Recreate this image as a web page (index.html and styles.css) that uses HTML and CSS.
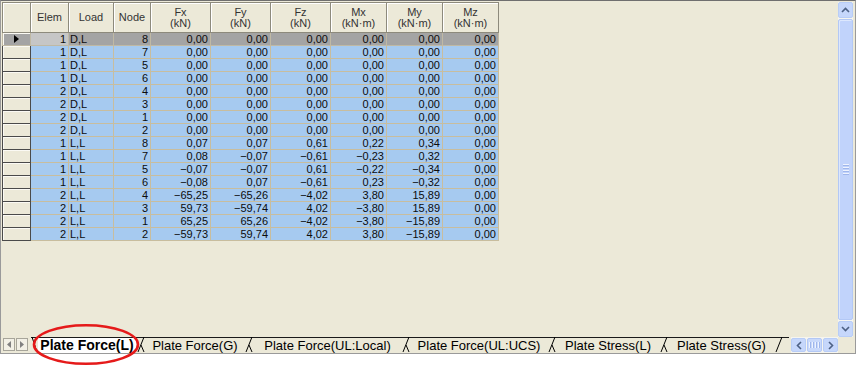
FILE: index.html
```html
<!DOCTYPE html>
<html>
<head>
<meta charset="utf-8">
<link rel="stylesheet" href="styles.css">
</head>
<body>
<div class="page">
<div class="window">
  <div class="main">
    <div class="grid-area">
      <table class="grid">
        <colgroup>
          <col class="c-rh"><col class="c-elem"><col class="c-load"><col class="c-node">
          <col class="c-f"><col class="c-f"><col class="c-f">
          <col class="c-m"><col class="c-m"><col class="c-m">
        </colgroup>
        <thead>
          <tr class="hdr">
            <th class="corner"></th>
            <th>Elem</th><th>Load</th><th>Node</th>
            <th>Fx<br>(kN)</th><th>Fy<br>(kN)</th><th>Fz<br>(kN)</th>
            <th>Mx<br>(kN·m)</th><th>My<br>(kN·m)</th><th>Mz<br>(kN·m)</th>
          </tr>
        </thead>
        <tbody>
          <tr class="sel"><td class="rh"><span class="arrow"></span></td><td class="num first">1</td><td class="txt">D,L</td><td class="num">8</td><td class="num">0,00</td><td class="num">0,00</td><td class="num">0,00</td><td class="num">0,00</td><td class="num">0,00</td><td class="num">0,00</td></tr>
          <tr><td class="rh"></td><td class="num">1</td><td class="txt">D,L</td><td class="num">7</td><td class="num">0,00</td><td class="num">0,00</td><td class="num">0,00</td><td class="num">0,00</td><td class="num">0,00</td><td class="num">0,00</td></tr>
          <tr><td class="rh"></td><td class="num">1</td><td class="txt">D,L</td><td class="num">5</td><td class="num">0,00</td><td class="num">0,00</td><td class="num">0,00</td><td class="num">0,00</td><td class="num">0,00</td><td class="num">0,00</td></tr>
          <tr><td class="rh"></td><td class="num">1</td><td class="txt">D,L</td><td class="num">6</td><td class="num">0,00</td><td class="num">0,00</td><td class="num">0,00</td><td class="num">0,00</td><td class="num">0,00</td><td class="num">0,00</td></tr>
          <tr><td class="rh"></td><td class="num">2</td><td class="txt">D,L</td><td class="num">4</td><td class="num">0,00</td><td class="num">0,00</td><td class="num">0,00</td><td class="num">0,00</td><td class="num">0,00</td><td class="num">0,00</td></tr>
          <tr><td class="rh"></td><td class="num">2</td><td class="txt">D,L</td><td class="num">3</td><td class="num">0,00</td><td class="num">0,00</td><td class="num">0,00</td><td class="num">0,00</td><td class="num">0,00</td><td class="num">0,00</td></tr>
          <tr><td class="rh"></td><td class="num">2</td><td class="txt">D,L</td><td class="num">1</td><td class="num">0,00</td><td class="num">0,00</td><td class="num">0,00</td><td class="num">0,00</td><td class="num">0,00</td><td class="num">0,00</td></tr>
          <tr><td class="rh"></td><td class="num">2</td><td class="txt">D,L</td><td class="num">2</td><td class="num">0,00</td><td class="num">0,00</td><td class="num">0,00</td><td class="num">0,00</td><td class="num">0,00</td><td class="num">0,00</td></tr>
          <tr><td class="rh"></td><td class="num">1</td><td class="txt">L,L</td><td class="num">8</td><td class="num">0,07</td><td class="num">0,07</td><td class="num">0,61</td><td class="num">0,22</td><td class="num">0,34</td><td class="num">0,00</td></tr>
          <tr><td class="rh"></td><td class="num">1</td><td class="txt">L,L</td><td class="num">7</td><td class="num">0,08</td><td class="num">−0,07</td><td class="num">−0,61</td><td class="num">−0,23</td><td class="num">0,32</td><td class="num">0,00</td></tr>
          <tr><td class="rh"></td><td class="num">1</td><td class="txt">L,L</td><td class="num">5</td><td class="num">−0,07</td><td class="num">−0,07</td><td class="num">0,61</td><td class="num">−0,22</td><td class="num">−0,34</td><td class="num">0,00</td></tr>
          <tr><td class="rh"></td><td class="num">1</td><td class="txt">L,L</td><td class="num">6</td><td class="num">−0,08</td><td class="num">0,07</td><td class="num">−0,61</td><td class="num">0,23</td><td class="num">−0,32</td><td class="num">0,00</td></tr>
          <tr><td class="rh"></td><td class="num">2</td><td class="txt">L,L</td><td class="num">4</td><td class="num">−65,25</td><td class="num">−65,26</td><td class="num">−4,02</td><td class="num">3,80</td><td class="num">15,89</td><td class="num">0,00</td></tr>
          <tr><td class="rh"></td><td class="num">2</td><td class="txt">L,L</td><td class="num">3</td><td class="num">59,73</td><td class="num">−59,74</td><td class="num">4,02</td><td class="num">−3,80</td><td class="num">15,89</td><td class="num">0,00</td></tr>
          <tr><td class="rh"></td><td class="num">2</td><td class="txt">L,L</td><td class="num">1</td><td class="num">65,25</td><td class="num">65,26</td><td class="num">−4,02</td><td class="num">−3,80</td><td class="num">−15,89</td><td class="num">0,00</td></tr>
          <tr><td class="rh"></td><td class="num">2</td><td class="txt">L,L</td><td class="num">2</td><td class="num">−59,73</td><td class="num">59,74</td><td class="num">4,02</td><td class="num">3,80</td><td class="num">−15,89</td><td class="num">0,00</td></tr>
        </tbody>
      </table>
    </div>
    <div class="vscroll">
      <div class="sb-btn">
        <svg width="9" height="6" viewBox="0 0 9 6"><path d="M1 5 L4.5 1.5 L8 5" fill="none" stroke="#4d6185" stroke-width="1.6"/></svg>
      </div>
      <div class="sb-thumb-v">
        <div class="grip-v"><i></i><i></i><i></i><i></i></div>
      </div>
      <div class="sb-btn">
        <svg width="9" height="6" viewBox="0 0 9 6"><path d="M1 1 L4.5 4.5 L8 1" fill="none" stroke="#4d6185" stroke-width="1.6"/></svg>
      </div>
    </div>
  </div>
  <div class="tabbar">
    <div class="nav">
      <div class="nav-btn"><svg width="4" height="7" viewBox="0 0 4 7"><path d="M4 0 L0 3.5 L4 7Z" fill="#808080"/></svg></div>
      <div class="nav-btn"><svg width="4" height="7" viewBox="0 0 4 7"><path d="M0 0 L4 3.5 L0 7Z" fill="#808080"/></svg></div>
    </div>
    <div class="tabs">
      <svg class="sep sep-first" width="7" height="16" viewBox="0 0 7 16"><path d="M1 0 L6 15" stroke="#000" stroke-width="1" fill="none"/></svg>
      <div class="tab active t1">Plate Force(L)</div>
      <svg class="sep" width="10" height="16" viewBox="0 0 10 16"><path d="M8 0 L2 15 M5 8 L8 15" stroke="#000" stroke-width="1" fill="none"/></svg>
      <div class="tab t2">Plate Force(G)</div>
      <svg class="sep" width="10" height="16" viewBox="0 0 10 16"><path d="M8 0 L2 15 M5 8 L8 15" stroke="#000" stroke-width="1" fill="none"/></svg>
      <div class="tab t3">Plate Force(UL:Local)</div>
      <svg class="sep" width="10" height="16" viewBox="0 0 10 16"><path d="M8 0 L2 15 M5 8 L8 15" stroke="#000" stroke-width="1" fill="none"/></svg>
      <div class="tab t4">Plate Force(UL:UCS)</div>
      <svg class="sep" width="10" height="16" viewBox="0 0 10 16"><path d="M8 0 L2 15 M5 8 L8 15" stroke="#000" stroke-width="1" fill="none"/></svg>
      <div class="tab t5">Plate Stress(L)</div>
      <svg class="sep" width="10" height="16" viewBox="0 0 10 16"><path d="M8 0 L2 15 M5 8 L8 15" stroke="#000" stroke-width="1" fill="none"/></svg>
      <div class="tab t6">Plate Stress(G)</div>
      <svg class="sep" width="10" height="16" viewBox="0 0 10 16"><path d="M8 0 L2 15" stroke="#000" stroke-width="1" fill="none"/></svg>
    </div>
    <div class="hscroll">
      <div class="sb-btn-h">
        <svg width="6" height="9" viewBox="0 0 6 9"><path d="M5 1 L1.5 4.5 L5 8" fill="none" stroke="#4d6185" stroke-width="1.6"/></svg>
      </div>
      <div class="sb-thumb-h"><div class="grip-h"><i></i><i></i><i></i><i></i></div></div>
      <div class="sb-btn-h">
        <svg width="6" height="9" viewBox="0 0 6 9"><path d="M1 1 L4.5 4.5 L1 8" fill="none" stroke="#4d6185" stroke-width="1.6"/></svg>
      </div>
    </div>
  </div>
</div>
<svg class="ring" width="110" height="42" viewBox="0 0 110 42"><ellipse cx="55" cy="20.5" rx="52" ry="19.3" fill="none" stroke="#e51a1a" stroke-width="2.6"/></svg>
</div>
</body>
</html>
```

FILE: styles.css
```css
html, body {
  margin: 0;
  padding: 0;
  background: #ffffff;
}

.page {
  position: relative;
  width: 857px;
  height: 366px;
}

.window {
  width: 854px;
  height: 352px;
  border: 1px solid #9a9a9a;
  border-top-color: #6f6f6f;
  background: #ece9d8;
  display: flex;
  flex-direction: column;
  font-family: "Liberation Sans", Arial, sans-serif;
}

.main {
  height: 336px;
  display: flex;
}

.grid-area {
  flex: 1;
  padding: 1px 0 0 1px;
  overflow: hidden;
}

.grid {
  border-collapse: collapse;
  table-layout: fixed;
  width: 496px;
  font-size: 11px;
  color: #0c0c0c;
}

.c-rh { width: 28px; }
.c-elem { width: 38px; }
.c-load { width: 45px; }
.c-node { width: 37px; }
.c-f { width: 60px; }
.c-m { width: 56px; }

.hdr { height: 30px; }

.hdr th {
  background: #ece9d8;
  border: 1px solid #8d8a7c;
  box-shadow: inset 1px 1px 0 #ffffff;
  font-weight: normal;
  color: #333333;
  line-height: 11px;
  padding: 0;
  text-align: center;
  vertical-align: middle;
}

.grid tbody tr { height: 13px; }

.grid td {
  padding: 0 2px;
  height: 12px;
  line-height: 11px;
  border: 1px solid #c8bd9e;
  background: #a6caf0;
  white-space: nowrap;
  overflow: hidden;
}

.grid td.num { text-align: right; }
.grid td.txt { text-align: left; padding-left: 1px; }

.grid tr.sel td { background: #a4a4a4; border-color: #c0b9a4; }
.grid tr.sel td.first { background: #c6c6c6; }

.grid td.rh {
  background: #ece9d8;
  border: 1px solid #4a4a4a;
  border-top-color: #7d7b70;
  box-shadow: inset 1px 1px 0 #fbfaf4;
  padding: 0;
}

.arrow {
  display: block;
  width: 0;
  height: 0;
  margin-left: 11px;
  border-top: 4px solid transparent;
  border-bottom: 4px solid transparent;
  border-left: 5px solid #000;
}

/* vertical scrollbar */
.vscroll {
  width: 15px;
  margin: 1px 2px 0 0;
  height: 335px;
  background: #f6f5ef;
  display: flex;
  flex-direction: column;
  gap: 1px;
}

.sb-btn {
  height: 14px;
  border: 1px solid #b8cdf7;
  border-radius: 2px;
  background: #c6d7fb;
  display: flex;
  align-items: center;
  justify-content: center;
}

.sb-thumb-v {
  flex: 1;
  border: 1px solid #b3c8f5;
  border-radius: 2px;
  background: #c1d3fb;
  box-shadow: inset 1px 1px 0 #dce7fd;
  display: flex;
  align-items: center;
  justify-content: center;
}

.grip-v {
  display: flex;
  flex-direction: column;
  gap: 1px;
}

.grip-v i {
  display: block;
  width: 6px;
  height: 1px;
  background: #eef3fe;
  border-bottom: 1px solid #9fb6ec;
}

/* tab bar */
.tabbar {
  height: 16px;
  display: flex;
  align-items: stretch;
}

.nav {
  display: flex;
  gap: 1px;
  padding: 1px 0 2px 2px;
  width: 28px;
  box-sizing: border-box;
}

.nav-btn {
  width: 12px;
  border: 1px solid #a7a59a;
  background: #f2f0e6;
  box-sizing: border-box;
  display: flex;
  align-items: center;
  justify-content: center;
}

.tabs {
  display: flex;
  align-items: stretch;
  border-top: 1px solid #1a1a1a;
  margin-left: 2px;
  width: 758px;
  font-size: 13px;
  color: #000;
}

.sep {
  flex: none;
  margin-top: -1px;
}

.tab {
  display: flex;
  align-items: center;
  justify-content: center;
  line-height: 15px;
  white-space: nowrap;
}

.tab.active {
  font-weight: bold;
  font-size: 14px;
  background: #ffffff;
}

.t1 { width: 98px; }
.t2 { width: 98px; }
.t3 { width: 147px; }
.t4 { width: 136px; }
.t5 { width: 102px; }
.t6 { width: 105px; }

.hscroll {
  display: flex;
  gap: 1px;
  margin-left: 2px;
  padding: 1px 0 1px 0;
  width: 47px;
  background: #f6f5ef;
}

.sb-btn-h {
  width: 13px;
  border: 1px solid #b8cdf7;
  border-radius: 2px;
  background: #c6d7fb;
  display: flex;
  align-items: center;
  justify-content: center;
}

.sb-thumb-h {
  flex: 1;
  border: 1px solid #b3c8f5;
  border-radius: 2px;
  background: #c9d9fb;
  display: flex;
  align-items: center;
  justify-content: center;
}

.grip-h { display: flex; gap: 1px; }
.grip-h i {
  display: block;
  width: 1px;
  height: 6px;
  background: #eef3fe;
  border-right: 1px solid #9fb6ec;
}

.ring {
  position: absolute;
  left: 31px;
  top: 324px;
  overflow: visible;
}
```
